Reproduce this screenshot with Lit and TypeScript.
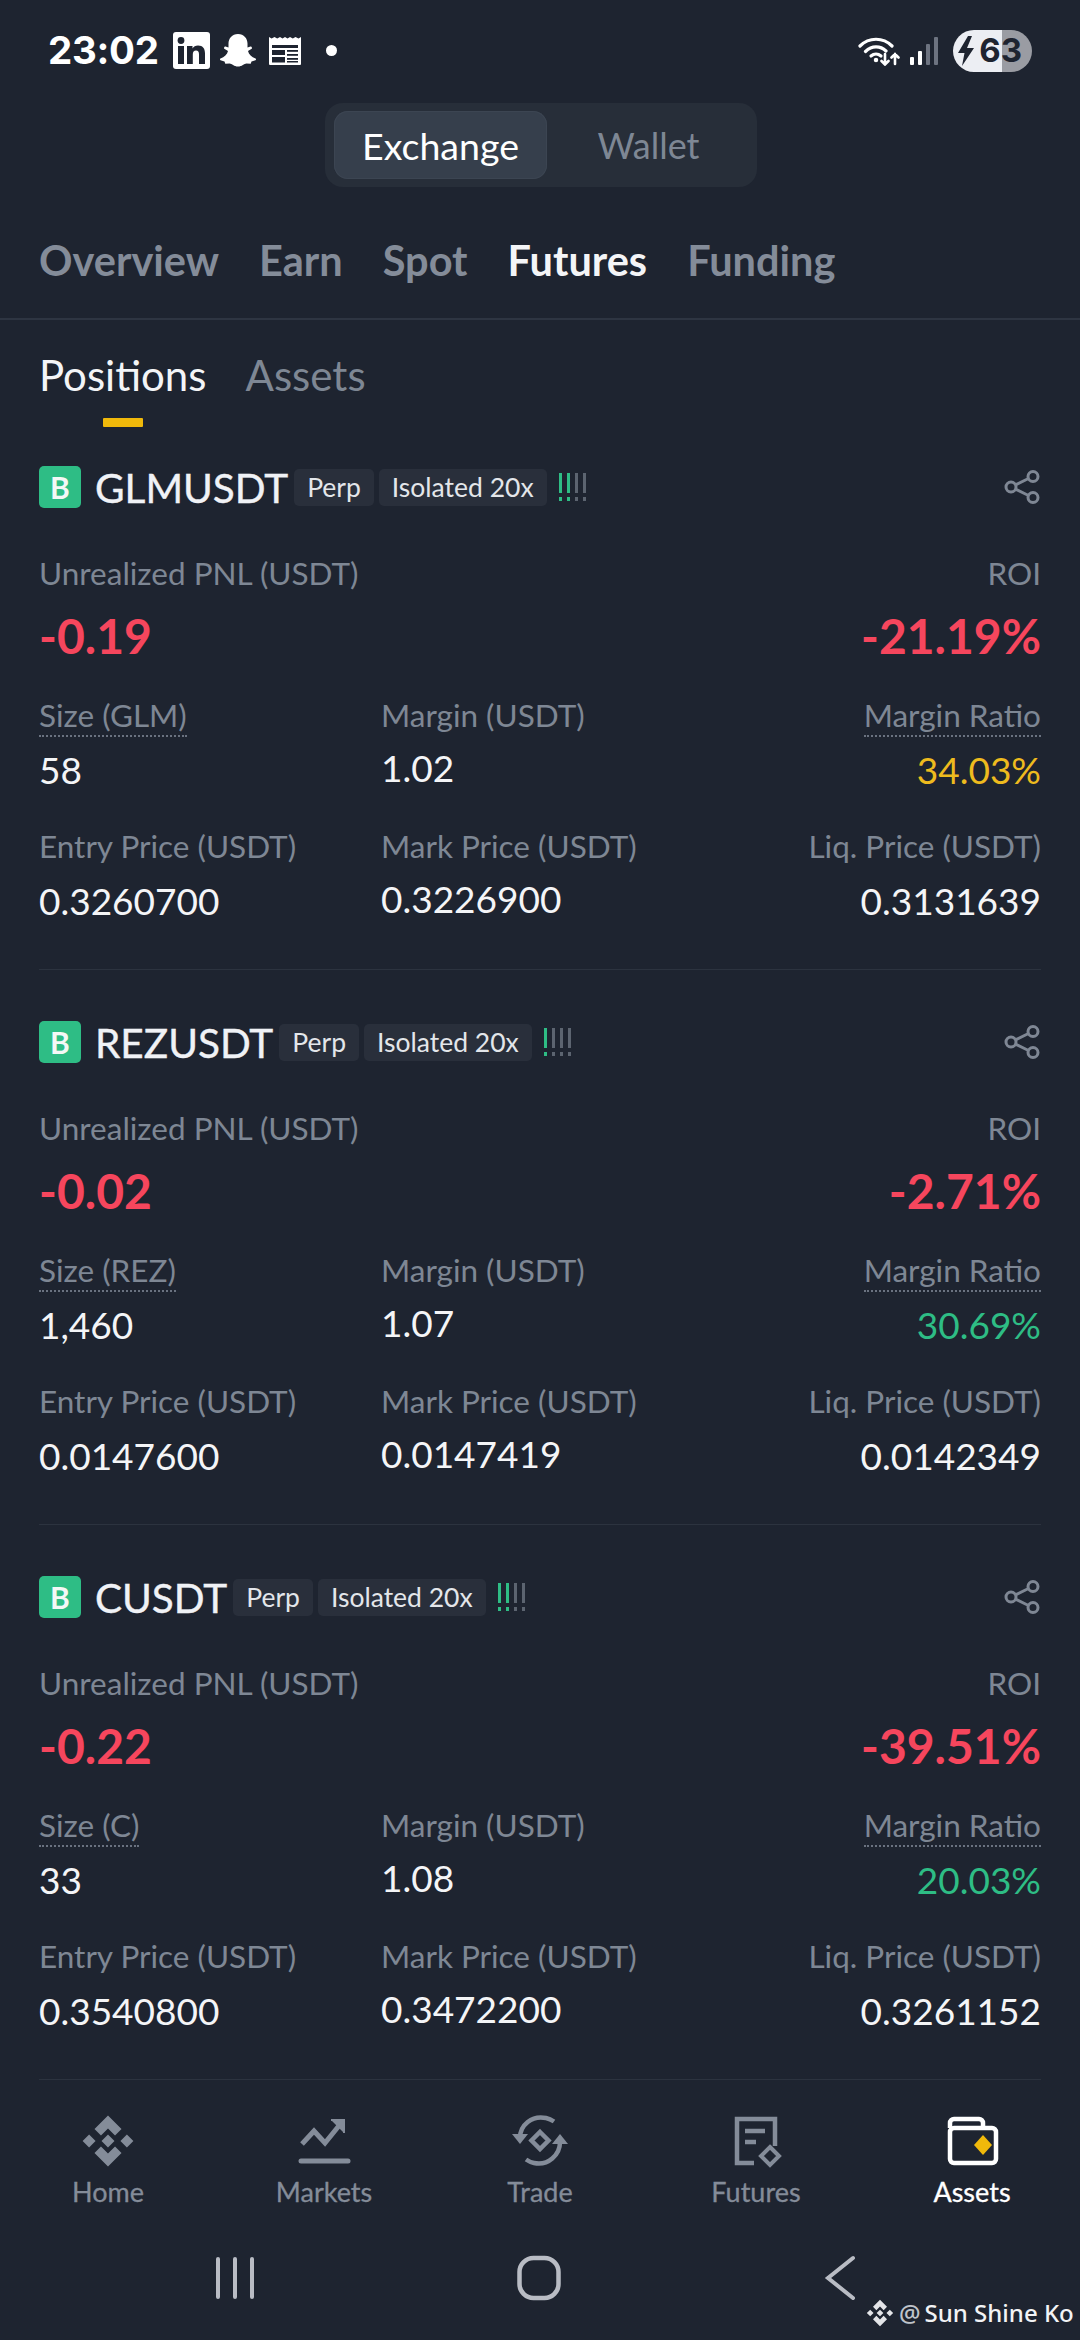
import { LitElement, html, css, svg } from "lit";
import { customElement } from "lit/decorators.js";

type Pos = { sym: string; base: string; pnl: string; roi: string; size: string; margin: string; ratio: string; ratioColor: string; entry: string; mark: string; liq: string; lit: number };

const POSITIONS: Pos[] = [
  { sym: "GLMUSDT", base: "GLM", pnl: "-0.19", roi: "-21.19%", size: "58", margin: "1.02", ratio: "34.03%", ratioColor: "yellow", entry: "0.3260700", mark: "0.3226900", liq: "0.3131639", lit: 2 },
  { sym: "REZUSDT", base: "REZ", pnl: "-0.02", roi: "-2.71%", size: "1,460", margin: "1.07", ratio: "30.69%", ratioColor: "green", entry: "0.0147600", mark: "0.0147419", liq: "0.0142349", lit: 1 },
  { sym: "CUSDT", base: "C", pnl: "-0.22", roi: "-39.51%", size: "33", margin: "1.08", ratio: "20.03%", ratioColor: "green", entry: "0.3540800", mark: "0.3472200", liq: "0.3261152", lit: 2 },
];

const binance = svg`<path d="M25 1.500L37.500 14l-6 6L25 13.500 18.500 20l-6-6zM25 48.500L37.500 36l-6-6L25 36.500 18.500 30l-6 6zM1.500 25l6-6 6 6-6 6zM36.500 25l6-6 6 6-6 6zM19 25l6-6 6 6-6 6z"/>`;

const shareIcon = html`<svg class="share" viewBox="0 0 36 34" fill="none" stroke="currentColor" stroke-width="3"><circle cx="7" cy="17" r="5"/><circle cx="29" cy="6.500" r="5"/><circle cx="29" cy="27.500" r="5"/><path d="M11.500 14.800L24.500 8.500M11.500 19.200L24.500 25.500"/></svg>`;

@customElement("app-root")
export class AppRoot extends LitElement {
  static styles = css`
    :host { display: block; width: 1080px; height: 2340px; background: #1e2430; color: #fff; font-family: Lato, "Liberation Sans", sans-serif; overflow: hidden; position: relative; }
    .page { height: 2340px; display: flex; flex-direction: column; }
    .status { height: 103px; flex: none; display: flex; align-items: center; justify-content: space-between; padding: 0 48px 2px 48px; box-sizing: border-box; }
    .st-left, .st-right { display: flex; align-items: center; }
    .time { font: 700 38.500px/1 Inter, sans-serif; letter-spacing: -0.3px; margin-right: 14px; }
    .st-left svg { display: block; }
    .in { width: 37px; height: 37px; margin-right: 9px; }
    .snap { width: 38px; height: 36px; margin-right: 11px; }
    .cal { width: 34px; height: 30px; margin-right: 24px; }
    .dot { width: 11px; height: 11px; border-radius: 50%; background: #fff; }
    .wifi { width: 42px; height: 30px; margin-right: 9px; }
    .signal { width: 30px; height: 30px; margin-right: 14px; }
    .batt { width: 79px; height: 42px; border-radius: 21px; background: linear-gradient(90deg, #eceef3 0 49px, #9a9ca3 49px); color: #1e2430; display: flex; align-items: center; justify-content: flex-end; padding-right: 10px; box-sizing: border-box; font: 700 33px/1 Inter, sans-serif; }
    .bolt { width: 20px; height: 32px; margin-right: 3px; flex: none; }
    .toggle-wrap { flex: none; display: flex; justify-content: center; padding-left: 2px; }
    .toggle { width: 432px; height: 84px; box-sizing: border-box; padding: 8px 9px; border-radius: 18px; background: #272e39; display: flex; }
    .seg { flex: 0 0 213px; border-radius: 14px; display: flex; align-items: center; justify-content: center; font-size: 37.500px; color: #7e8794; }
    .seg.on { background: #363f4c; color: #fff; box-shadow: 0 0 0 1px #3c4552 inset; }
    .seg.off { flex: 1; font-size: 36px; padding-left: 2px; }
    .tabs { flex: none; height: 133px; box-sizing: border-box; padding: 14px 39px 0; display: flex; gap: 40px; align-items: center; font-size: 41.500px; font-weight: 700; color: #848c99; border-bottom: 2px solid #2e3542; }
    .tabs .on { color: #f4f5f7; }
    .subtabs { flex: none; height: 107px; box-sizing: border-box; padding: 0 39px; display: flex; gap: 39px; font-size: 42px; color: #7e8794; position: relative; }
    .subtabs span { line-height: 74px; margin-top: 18px; }
    .subtabs .on { color: #f4f5f7; }
    .ink { position: absolute; left: 103px; bottom: 0; width: 40px; height: 9px; border-radius: 1px; background: #f0b90b; }
    main { flex: 1; min-height: 0; overflow: hidden; }
    .card { margin: 0 39px; padding: 51px 0 44px; border-bottom: 1px solid #2c333f; }
    .card:first-child { padding-top: 39px; }
    .head { display: flex; align-items: center; height: 42px; }
    .b { width: 42px; height: 42px; flex: none; border-radius: 5px; background: #2ebd85; font-size: 30px; font-weight: 700; display: flex; align-items: center; justify-content: center; color: #f4f8f6; margin-right: 14px; }
    .sym { font-size: 40.500px; font-weight: 400; color: #f0f2f6; margin-right: 6px; -webkit-text-stroke: 0.4px #f0f2f6; }
    .chip { height: 37px; box-sizing: border-box; padding: 0 13px; border-radius: 5px; background: #292f3b; font-size: 26.500px; line-height: 37px; color: #e3e6ea; margin-right: 5px; }
    .bars { display: flex; gap: 5px; margin-left: 7px; height: 28px; }
    .bar { width: 3px; height: 28px; background: linear-gradient(#5c6470 0 20px, transparent 20px 24px, #5c6470 24px); }
    .bar.lit { background: linear-gradient(#2ebd85 0 20px, transparent 20px 24px, #2ebd85 24px); }
    .share { width: 36px; height: 34px; margin-left: auto; margin-right: 1px; color: #7f8794; }
    .hero { display: flex; justify-content: space-between; margin-top: 45px; }
    .col { display: flex; flex-direction: column; }
    .col.r { align-items: flex-end; text-align: right; }
    .label { font-size: 31.500px; line-height: 40px; color: #7e8794; white-space: nowrap; }
    .dotted span { border-bottom: 2px dotted #6a7280; padding-bottom: 1px; }
    .big { font-size: 48px; font-weight: 700; line-height: 56px; margin-top: 15px; color: #f6465d; }
    .grid { display: grid; grid-template-columns: 342px 1fr 1fr; row-gap: 32px; margin-top: 31px; }
    .val { font-size: 37px; line-height: 48px; margin-top: 11px; color: #f4f5f7; }
    .mid .val { margin-top: 9px; }
    .yellow { color: #eebb1e; }
    .green { color: #2ebd85; }
    footer { flex: none; height: 257px; display: flex; flex-direction: column; }
    nav { display: grid; grid-template-columns: repeat(5, 216px); padding-top: 31px; }
    .item { display: flex; flex-direction: column; align-items: center; color: #848c99; font-size: 27px; font-weight: 400; }
    .item svg { width: 54px; height: 54px; display: block; }
    .item svg.wide { width: 60px; }
    .item span { line-height: 34px; margin-top: 7px; -webkit-text-stroke: 0.3px currentColor; }
    .item.on { color: #fff; }
    .sys { display: grid; grid-template-columns: repeat(3, 303px); justify-content: center; margin-top: 46px; padding-right: 2px; color: #b9bcc4; }
    .sys div { display: flex; justify-content: center; }
    .sys svg { width: 60px; height: 46px; display: block; }
    .mark { position: absolute; left: 866px; top: 2297px; display: flex; align-items: center; font: 500 24px/32px "Noto Sans", sans-serif; color: #f2f3f5; white-space: nowrap; }
    .mark svg { width: 28px; height: 28px; margin-right: 5px; fill: #e4e5e8; }
    .mark em { font-style: normal; color: #bfc3ca; margin-right: 4px; }
  `;

  private card(p: Pos) {
    return html`<section class="card">
      <div class="head">
        <div class="b">B</div>
        <div class="sym">${p.sym}</div>
        <div class="chip">Perp</div>
        <div class="chip">Isolated 20x</div>
        <div class="bars">${[0, 1, 2, 3].map((i) => html`<i class="bar ${i < p.lit ? "lit" : ""}"></i>`)}</div>
        ${shareIcon}
      </div>
      <div class="hero">
        <div class="col"><div class="label">Unrealized PNL (USDT)</div><div class="big">${p.pnl}</div></div>
        <div class="col r"><div class="label">ROI</div><div class="big">${p.roi}</div></div>
      </div>
      <div class="grid">
        <div class="col"><div class="label dotted"><span>Size (${p.base})</span></div><div class="val">${p.size}</div></div>
        <div class="col mid"><div class="label">Margin (USDT)</div><div class="val">${p.margin}</div></div>
        <div class="col r"><div class="label dotted"><span>Margin Ratio</span></div><div class="val ${p.ratioColor}">${p.ratio}</div></div>
        <div class="col"><div class="label">Entry Price (USDT)</div><div class="val">${p.entry}</div></div>
        <div class="col mid"><div class="label">Mark Price (USDT)</div><div class="val">${p.mark}</div></div>
        <div class="col r"><div class="label">Liq. Price (USDT)</div><div class="val">${p.liq}</div></div>
      </div>
    </section>`;
  }

  render() {
    return html`<div class="page">
      <div class="status">
        <div class="st-left">
          <div class="time">23:02</div>
          <svg class="in" viewBox="0 0 37 37"><rect width="37" height="37" rx="3" fill="#fff"/><g fill="#1e2430"><rect x="5" y="14" width="6" height="18"/><circle cx="8" cy="8.500" r="3.400"/><path d="M14 14h5.500v2.500c1-1.800 3-3 5.500-3 5 0 7 3 7 8V32h-6v-9.500c0-2.500-.8-4-3-4s-3.200 1.600-3.200 4V32H14z"/></g></svg>
          <svg class="snap" viewBox="0 0 38 36"><path fill="#fff" d="M19 1c6 0 9.500 4.500 9.500 9.500v4l3-1c1.500 0 2 1.800.8 2.600l-3.300 1.900c.8 3.500 3.600 6.300 7.500 7.500.8.300.7 1.300 0 1.700l-4 1.200-.8 2.300-4.200-.2c-2.500.3-4.500 3-8.500 3s-6-2.700-8.500-3l-4.200.2-.8-2.300-4-1.200c-.7-.4-.8-1.400 0-1.700 3.900-1.200 6.700-4 7.500-7.500l-3.300-1.900c-1.200-.8-.7-2.600.8-2.600l3 1v-4C9.500 5.500 13 1 19 1z"/></svg>
          <svg class="cal" viewBox="0 0 34 30"><path fill="#fff" d="M1 1l2.600 1.500L6.500 1l2.700 1.500L12 1l2.500 1.500L17 1l2.500 1.500L22 1l2.800 1.500L27.500 1l3 1.500L33 1v27a1 1 0 0 1-1 1H2a1 1 0 0 1-1-1z"/><g fill="#1e2430"><rect x="4" y="9" width="26" height="3"/><rect x="4" y="14" width="13" height="5"/><rect x="4" y="21" width="13" height="5.500"/><rect x="19" y="14" width="11" height="1.800"/><rect x="19" y="18" width="11" height="1.800"/><rect x="19" y="22" width="11" height="1.800"/><rect x="19" y="25" width="11" height="1.500"/></g></svg>
          <div class="dot"></div>
        </div>
        <div class="st-right">
          <svg class="wifi" viewBox="0 0 42 30" fill="none" stroke="#fff" stroke-width="3.200" stroke-linecap="round"><path d="M2 10C11 1 25 1 34 10M7.500 15.500C14 9.500 22 9.500 28 15"/><path d="M13 20c3-2.500 7-2.500 10 0" /><circle cx="18" cy="24" r="1.500" fill="#fff" stroke-width="1.500"/><path stroke-width="2.600" d="M27 18v10M23.500 25l3.500 3.500 3.500-3.500M37 28V18M33.500 21.500l3.500-3.500 3.500 3.500"/></svg>
          <svg class="signal" viewBox="0 0 30 30"><rect x="1" y="21" width="4" height="8" rx="1" fill="#fff"/><rect x="9" y="15" width="4" height="14" rx="1" fill="#fff"/><rect x="17" y="8" width="4" height="21" rx="1" fill="#6d7380"/><rect x="25" y="1" width="4" height="28" rx="1" fill="#6d7380"/></svg>
          <div class="batt"><svg class="bolt" viewBox="0 0 20 32"><path fill="#1e2430" d="M12 1L2 18h6.500L6 31l12-18h-7l5-12z"/></svg>63</div>
        </div>
      </div>
      <div class="toggle-wrap"><div class="toggle"><div class="seg on">Exchange</div><div class="seg off">Wallet</div></div></div>
      <div class="tabs"><span>Overview</span><span>Earn</span><span>Spot</span><span class="on">Futures</span><span>Funding</span></div>
      <div class="subtabs"><span class="on">Positions</span><span>Assets</span><i class="ink"></i></div>
      <main>${POSITIONS.map((p) => this.card(p))}</main>
      <footer>
        <nav>
          <div class="item"><svg viewBox="0 0 50 50" fill="currentColor">${binance}</svg><span>Home</span></div>
          <div class="item"><svg viewBox="0 0 54 54" fill="none" stroke="currentColor" stroke-width="5"><path d="M5 30L17 17l11 12L45 8"/><path d="M34 6h13v13" fill="currentColor" stroke-width="2"/><path d="M4 47h47" stroke-linecap="round"/></svg><span>Markets</span></div>
          <div class="item"><svg class="wide" viewBox="0 0 60 54" fill="none" stroke="currentColor" stroke-width="4.500"><path d="M10 24C10 11 22 1 36 4c3 .6 5.500 1.800 8 3.500"/><path d="M50 28C50 41 38 52 24 49c-3-.6-5.500-1.800-8-3.500"/><path d="M2 20h16l-8 10z" fill="currentColor" stroke="none"/><path d="M42 30h16l-8-10z" fill="currentColor" stroke="none"/><path d="M30 18l8.500 8.500L30 35l-8.500-8.500z"/></svg><span>Trade</span></div>
          <div class="item"><svg viewBox="0 0 54 54" fill="none" stroke="currentColor" stroke-width="4.500"><path d="M25 49H8V5h38v27"/><path d="M16 17h20M16 28h11"/><path d="M41 33l9 9-9 9-9-9z" stroke-width="4"/></svg><span>Futures</span></div>
          <div class="item on"><svg viewBox="0 0 54 54" fill="none" stroke="currentColor" stroke-width="4.500"><path d="M5 14V9a4 4 0 0 1 4-4h25a4 4 0 0 1 4 4v5"/><rect x="5" y="14" width="46" height="35" rx="4"/><path d="M38 21l9 10-9 10-9-10z" fill="#f0b90b" stroke="none"/></svg><span>Assets</span></div>
        </nav>
        <div class="sys">
          <div><svg viewBox="0 0 60 46" fill="currentColor"><rect x="10" y="2" width="4" height="42" rx="2"/><rect x="27" y="2" width="4" height="42" rx="2"/><rect x="44" y="2" width="4" height="42" rx="2"/></svg></div>
          <div><svg viewBox="0 0 60 46" fill="none" stroke="currentColor" stroke-width="4.500"><rect x="10.500" y="3" width="39" height="40" rx="14"/></svg></div>
          <div><svg viewBox="0 0 60 46" fill="none" stroke="currentColor" stroke-width="4" stroke-linecap="round"><path d="M41 3L16 23l25 20"/></svg></div>
        </div>
      </footer>
      <div class="mark"><svg viewBox="0 0 50 50">${binance}</svg><em>@</em>Sun Shine Ko</div>
    </div>`;
  }
}
